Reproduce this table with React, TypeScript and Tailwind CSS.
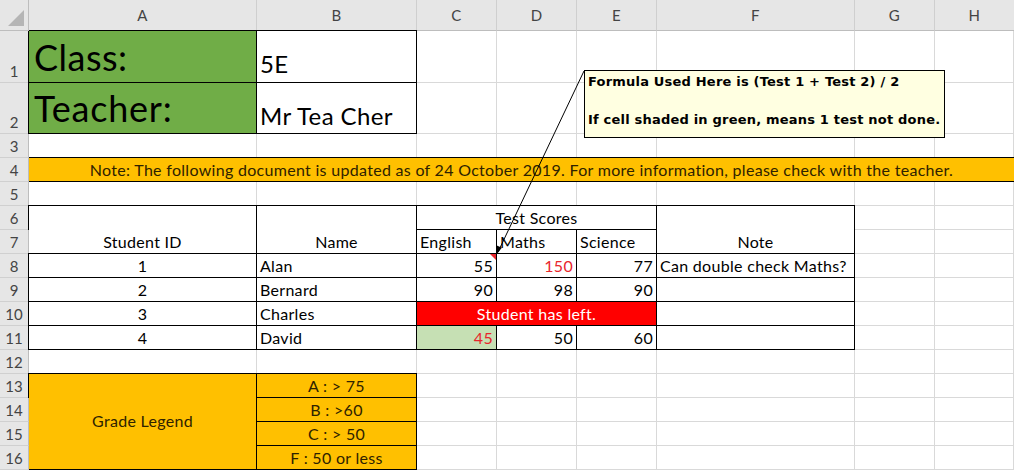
import type { ReactNode } from "react";

type CellProps = {
  className?: string;
  box?: boolean;
  middle?: boolean;
  children?: ReactNode;
};

// A worksheet cell. Normal cells only draw the faint gridline on their right
// and bottom; boxed cells pull back 1px so their black border sits on top of
// the neighbour's gridline, just like Excel draws "All Borders".
function Cell({ className = "", box = false, middle = false, children }: CellProps) {
  const edge = box
    ? "-mt-px -ml-px border border-black"
    : "border-r border-b border-[#d9d9d9]";
  const valign = middle ? "items-center" : "items-end";
  return (
    <div
      className={`flex overflow-hidden whitespace-nowrap px-[3px] pb-[1px] ${valign} ${edge} ${className}`}
    >
      {children}
    </div>
  );
}

function ColHead({ children, last = false }: { children?: ReactNode; last?: boolean }) {
  return (
    <div
      className={`flex items-center justify-center bg-[#e6e6e6] text-[15px] text-[#444] border-b border-[#bdbdbd] ${
        last ? "" : "border-r border-r-[#cfcfcf]"
      }`}
    >
      {children}
    </div>
  );
}

function RowHead({ n }: { n: number }) {
  return (
    <div className="flex items-end justify-center bg-[#e6e6e6] pb-[1px] text-[15px] leading-[20px] tracking-normal text-[#444] border-r border-b border-r-[#bdbdbd] border-b-[#d0d0d0]">
      {n}
    </div>
  );
}

function Empties({ count }: { count: number }) {
  return (
    <>
      {Array.from({ length: count }, (_, i) => (
        <Cell key={i} />
      ))}
    </>
  );
}

export default function App() {
  return (
    <div className="relative h-[471px] w-[1014px] overflow-hidden bg-white font-[Lato,sans-serif] text-[16px] leading-[20px] tracking-[0.3px] text-black">
      <div className="grid grid-cols-[29px_228px_160px_80px_80px_80px_198px_80px_1fr] grid-rows-[31px_52px_51px_repeat(14,24px)]">
        {/* column letters */}
        <div className="relative border-r border-b border-[#bdbdbd] bg-[#e6e6e6]">
          <svg className="absolute right-[4px] bottom-[4px]" width="16" height="16" viewBox="0 0 16 16">
            <polygon points="16,0 16,16 0,16" fill="#b5b5b5" />
          </svg>
        </div>
        <ColHead>A</ColHead>
        <ColHead>B</ColHead>
        <ColHead>C</ColHead>
        <ColHead>D</ColHead>
        <ColHead>E</ColHead>
        <ColHead>F</ColHead>
        <ColHead>G</ColHead>
        <ColHead last>H</ColHead>

        {/* 1 */}
        <RowHead n={1} />
        <Cell box className="bg-[#70ad47] pb-[5px] pl-[5px] text-[36px] leading-[40px] tracking-[0.5px]">Class:</Cell>
        <Cell box className="pb-[4px] text-[24px] leading-[28px] tracking-[0.4px]">5E</Cell>
        <Empties count={6} />

        {/* 2 */}
        <RowHead n={2} />
        <Cell box className="bg-[#70ad47] pb-[5px] pl-[5px] text-[36px] leading-[40px] tracking-[0.8px]">Teacher:</Cell>
        <Cell box className="pb-[3px] text-[24px] leading-[28px] tracking-[0.4px]">Mr Tea Cher</Cell>
        <Empties count={6} />

        {/* 3 */}
        <RowHead n={3} />
        <Empties count={8} />

        {/* 4 */}
        <RowHead n={4} />
        <div className="col-span-8 -mt-px flex items-end justify-center whitespace-nowrap border-y border-black bg-[#ffc000] pb-[1px] text-[#2e2200]">
          Note: The following document is updated as of 24 October 2019. For more information, please check with the teacher.
        </div>

        {/* 5 */}
        <RowHead n={5} />
        <Empties count={8} />

        {/* 6 */}
        <RowHead n={6} />
        <Cell box className="row-span-2 justify-center">Student ID</Cell>
        <Cell box className="row-span-2 justify-center">Name</Cell>
        <Cell box className="col-span-3 justify-center">Test Scores</Cell>
        <Cell box className="row-span-2 justify-center">Note</Cell>
        <Empties count={2} />

        {/* 7 */}
        <RowHead n={7} />
        <Cell box>English</Cell>
        <Cell box>Maths</Cell>
        <Cell box>Science</Cell>
        <Empties count={2} />

        {/* 8 */}
        <RowHead n={8} />
        <Cell box className="justify-center">1</Cell>
        <Cell box>Alan</Cell>
        <Cell box className="justify-end">55</Cell>
        <Cell box className="justify-end text-[#e8262c]">150</Cell>
        <Cell box className="justify-end">77</Cell>
        <Cell box>Can double check Maths?</Cell>
        <Empties count={2} />

        {/* 9 */}
        <RowHead n={9} />
        <Cell box className="justify-center">2</Cell>
        <Cell box>Bernard</Cell>
        <Cell box className="justify-end">90</Cell>
        <Cell box className="justify-end">98</Cell>
        <Cell box className="justify-end">90</Cell>
        <Cell box />
        <Empties count={2} />

        {/* 10 */}
        <RowHead n={10} />
        <Cell box className="justify-center">3</Cell>
        <Cell box>Charles</Cell>
        <Cell box className="col-span-3 justify-center bg-[#ff0000] text-white">Student has left.</Cell>
        <Cell box />
        <Empties count={2} />

        {/* 11 */}
        <RowHead n={11} />
        <Cell box className="justify-center">4</Cell>
        <Cell box>David</Cell>
        <Cell box className="justify-end bg-[#c6e0b4] text-[#e8262c]">45</Cell>
        <Cell box className="justify-end">50</Cell>
        <Cell box className="justify-end">60</Cell>
        <Cell box />
        <Empties count={2} />

        {/* 12 */}
        <RowHead n={12} />
        <Empties count={8} />

        {/* 13 - 16 grade legend */}
        <RowHead n={13} />
        <Cell box middle className="row-span-4 justify-center bg-[#ffc000] text-[#2e2200]">Grade Legend</Cell>
        <Cell box className="justify-center bg-[#ffc000] text-[#2e2200]">A : &gt; 75</Cell>
        <Empties count={6} />

        <RowHead n={14} />
        <Cell box className="justify-center bg-[#ffc000] text-[#2e2200]">B : &gt;60</Cell>
        <Empties count={6} />

        <RowHead n={15} />
        <Cell box className="justify-center bg-[#ffc000] text-[#2e2200]">C : &gt; 50</Cell>
        <Empties count={6} />

        <RowHead n={16} />
        <Cell box className="justify-center bg-[#ffc000] text-[#2e2200]">F : 50 or less</Cell>
        <Empties count={6} />
      </div>

      {/* comment arrow + red indicator on C8 */}
      <svg className="pointer-events-none absolute inset-0" width="1014" height="471">
        <line x1="584" y1="71" x2="498" y2="252" stroke="#000" strokeWidth="1" />
        <polygon points="497,254 501.8,247.7 496.8,245.5" fill="#000" />
        <polygon points="490,254 496,254 496,260" fill="#e8262c" />
      </svg>

      {/* comment box */}
      <div className="absolute left-[584px] top-[70px] h-[68px] w-[361px] border border-black bg-[#ffffe1] px-[3px] pt-[1px] font-[DejaVu_Sans,sans-serif] text-[13px] font-bold leading-[19px] tracking-[0.2px] text-black">
        <p>Formula Used Here is (Test 1 + Test 2) / 2</p>
        <p>&nbsp;</p>
        <p>If cell shaded in green, means 1 test not done.</p>
      </div>
    </div>
  );
}
